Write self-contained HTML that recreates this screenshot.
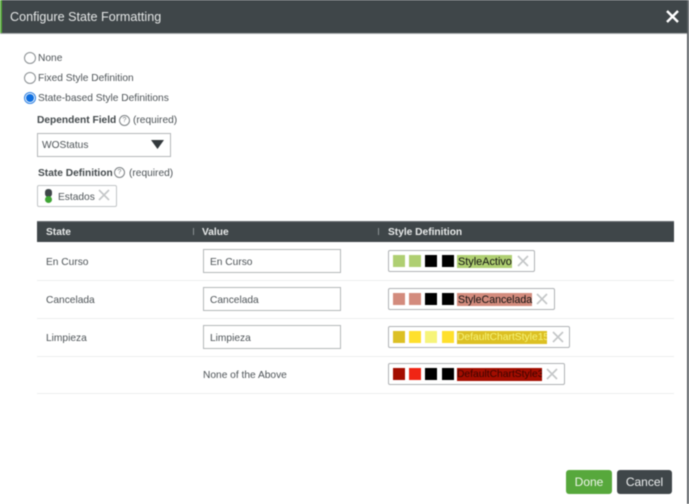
<!DOCTYPE html>
<html>
<head>
<meta charset="utf-8">
<style>
html,body{margin:0;padding:0;background:#fff}
body{width:689px;height:504px;overflow:hidden;position:relative;font-family:"Liberation Sans",sans-serif;font-size:10.2px;color:#4d5357}
#p{position:absolute;left:0;top:0;width:689px;height:504px;filter:blur(.4px)}
#p div{position:absolute;white-space:nowrap}
.t{line-height:14px;height:14px;margin-top:2px}
.b{font-weight:bold;color:#43494c}
.r{width:10px;height:10px;border:1px solid #8a8f92;border-radius:50%;background:#fff;margin-left:-1px;margin-top:-.5px}
.inp{width:136px;height:22px;border:1px solid #b4b8ba;background:#fff;line-height:25px;text-indent:6px;color:#4d5357}
.ln{left:37px;width:637px;height:1px;background:#eceeee}
.chip{height:20px;border:1px solid #b0b3b5;border-radius:2px;background:#fff}
.s{width:12px;height:12px;top:4px}
.lb{top:4px;height:13px;line-height:14px;font-size:10.9px}
.q{width:9px;height:9px;border:1px solid #7c8184;border-radius:50%;font-size:7px;line-height:9px;text-align:center;color:#7c8184}
</style>
</head>
<body>
<div id="p">
<div style="left:0;top:0;width:689px;height:33px;background:#3f4649"></div>
<div style="left:0;top:33px;width:689px;height:1px;background:#a9adaf"></div>
<div style="left:0;top:0;width:2px;height:33px;background:#57a83c"></div>
<div style="left:10px;top:9px;font-size:12.6px;line-height:16px;color:#e4e6e6">Configure State Formatting</div>
<svg style="position:absolute;left:666px;top:10px" width="13" height="13" viewBox="0 0 13 13"><path d="M1 1L12 12M12 1L1 12" stroke="#fff" stroke-width="2.4"/></svg>
<div style="left:687px;top:0;width:2px;height:504px;background:#5d6265"></div>

<div class="r" style="left:25px;top:52px"></div>
<div class="t" style="left:38px;top:49.500px">None</div>
<div class="r" style="left:25px;top:72px"></div>
<div class="t" style="left:38px;top:69.500px">Fixed Style Definition</div>
<div class="r" style="left:25px;top:92px;border-color:#2c7fe0"></div>
<div style="left:26px;top:93.500px;width:8px;height:8px;border-radius:50%;background:#0f6fe0"></div>
<div class="t" style="left:38px;top:90px">State-based Style Definitions</div>

<div class="t b" style="left:37px;top:112px">Dependent Field</div>
<div class="q" style="left:119px;top:115px">?</div>
<div class="t" style="left:133px;top:112px">(required)</div>
<div style="left:37px;top:133px;width:132px;height:22px;border:1px solid #b4b8ba;line-height:24px;text-indent:4px;color:#4d5357">WOStatus</div>
<svg style="position:absolute;left:151px;top:140px" width="13" height="9" viewBox="0 0 13 9"><path d="M0 0H13L6.500 9Z" fill="#33393c"/></svg>

<div class="t b" style="left:38px;top:165px">State Definition</div>
<div class="q" style="left:114px;top:167px">?</div>
<div class="t" style="left:129px;top:165px">(required)</div>
<div style="left:37px;top:185px;width:78px;height:20px;border:1px solid #c2c5c7;border-radius:2px"></div>
<div style="left:45px;top:189px;width:7px;height:8px;border-radius:3px;background:#3f4649"></div>
<div style="left:45px;top:196px;width:7px;height:7px;border-radius:50%;background:#3fa535"></div>
<div class="t" style="left:58px;top:189px">Estados</div>
<svg style="position:absolute;left:98px;top:189px" width="12" height="12" viewBox="0 0 12 12"><path d="M1 1L11 11M11 1L1 11" stroke="#c4c6c8" stroke-width="1.600"/></svg>

<div style="left:37px;top:221px;width:637px;height:21px;background:#3f4649"></div>
<div style="left:37px;top:221px;width:637px;height:1px;background:#6a6f72"></div>
<div class="t b" style="left:46px;top:224px;color:#e8eaea">State</div>
<div style="left:193px;top:228px;width:1px;height:7px;background:#8b9092"></div>
<div class="t b" style="left:202px;top:224px;color:#e8eaea">Value</div>
<div style="left:378px;top:228px;width:1px;height:7px;background:#8b9092"></div>
<div class="t b" style="left:388px;top:224px;color:#e8eaea">Style Definition</div>

<div class="t" style="left:46px;top:254px">En Curso</div>
<div class="inp" style="left:203px;top:249px">En Curso</div>
<div class="ln" style="top:280px"></div>
<div class="t" style="left:46px;top:292px">Cancelada</div>
<div class="inp" style="left:203px;top:287px">Cancelada</div>
<div class="ln" style="top:318px"></div>
<div class="t" style="left:46px;top:330px">Limpieza</div>
<div class="inp" style="left:203px;top:325px">Limpieza</div>
<div class="ln" style="top:356px"></div>
<div class="t" style="left:203px;top:367px">None of the Above</div>
<div class="ln" style="top:393px"></div>

<div class="chip" style="left:388px;top:250px;width:145px">
  <div class="s" style="left:4px;background:#afcf72"></div>
  <div class="s" style="left:20px;background:#afcf72"></div>
  <div class="s" style="left:36px;background:#000"></div>
  <div class="s" style="left:53px;background:#000"></div>
  <div class="lb" style="left:68px;width:55px;background:#afcf72;color:#111;text-indent:1px">StyleActivo</div>
  <svg style="position:absolute;left:128px;top:4px" width="12" height="12" viewBox="0 0 12 12"><path d="M1 1L11 11M11 1L1 11" stroke="#c4c6c8" stroke-width="1.600"/></svg>
</div>
<div class="chip" style="left:388px;top:288px;width:165px">
  <div class="s" style="left:4px;background:#d38b7d"></div>
  <div class="s" style="left:20px;background:#d38b7d"></div>
  <div class="s" style="left:36px;background:#000"></div>
  <div class="s" style="left:53px;background:#000"></div>
  <div class="lb" style="left:68px;width:75px;background:#d38b7d;color:#111;font-size:10.600px;text-indent:1px">StyleCancelada</div>
  <svg style="position:absolute;left:147px;top:4px" width="12" height="12" viewBox="0 0 12 12"><path d="M1 1L11 11M11 1L1 11" stroke="#c4c6c8" stroke-width="1.600"/></svg>
</div>
<div class="chip" style="left:388px;top:326px;width:180px">
  <div class="s" style="left:4px;background:#dcc024"></div>
  <div class="s" style="left:20px;background:#ffe02c"></div>
  <div class="s" style="left:36px;background:#f6f47a"></div>
  <div class="s" style="left:53px;background:#ffe02c"></div>
  <div class="lb" style="left:68px;width:90px;background:#dcc024;color:#f6f47a;font-size:10.300px;overflow:hidden">DefaultChartStyle15</div>
  <svg style="position:absolute;left:163px;top:4px" width="12" height="12" viewBox="0 0 12 12"><path d="M1 1L11 11M11 1L1 11" stroke="#c4c6c8" stroke-width="1.600"/></svg>
</div>
<div class="chip" style="left:388px;top:363px;width:175px">
  <div class="s" style="left:4px;background:#a30d00"></div>
  <div class="s" style="left:20px;background:#f02514"></div>
  <div class="s" style="left:36px;background:#000"></div>
  <div class="s" style="left:53px;background:#000"></div>
  <div class="lb" style="left:68px;width:85px;background:#a30d00;color:#3a0500;font-size:10.300px;overflow:hidden">DefaultChartStyle3</div>
  <svg style="position:absolute;left:157px;top:4px" width="12" height="12" viewBox="0 0 12 12"><path d="M1 1L11 11M11 1L1 11" stroke="#c4c6c8" stroke-width="1.600"/></svg>
</div>

<div style="left:566px;top:470px;width:46px;height:24px;background:#57a83c;border-radius:3px;color:#eef5ea;font-size:12px;line-height:24px;text-align:center">Done</div>
<div style="left:617px;top:470px;width:55px;height:24px;background:#3f4649;border-radius:3px;color:#eceeee;font-size:12px;line-height:24px;text-align:center">Cancel</div>
</div>
</body>
</html>
